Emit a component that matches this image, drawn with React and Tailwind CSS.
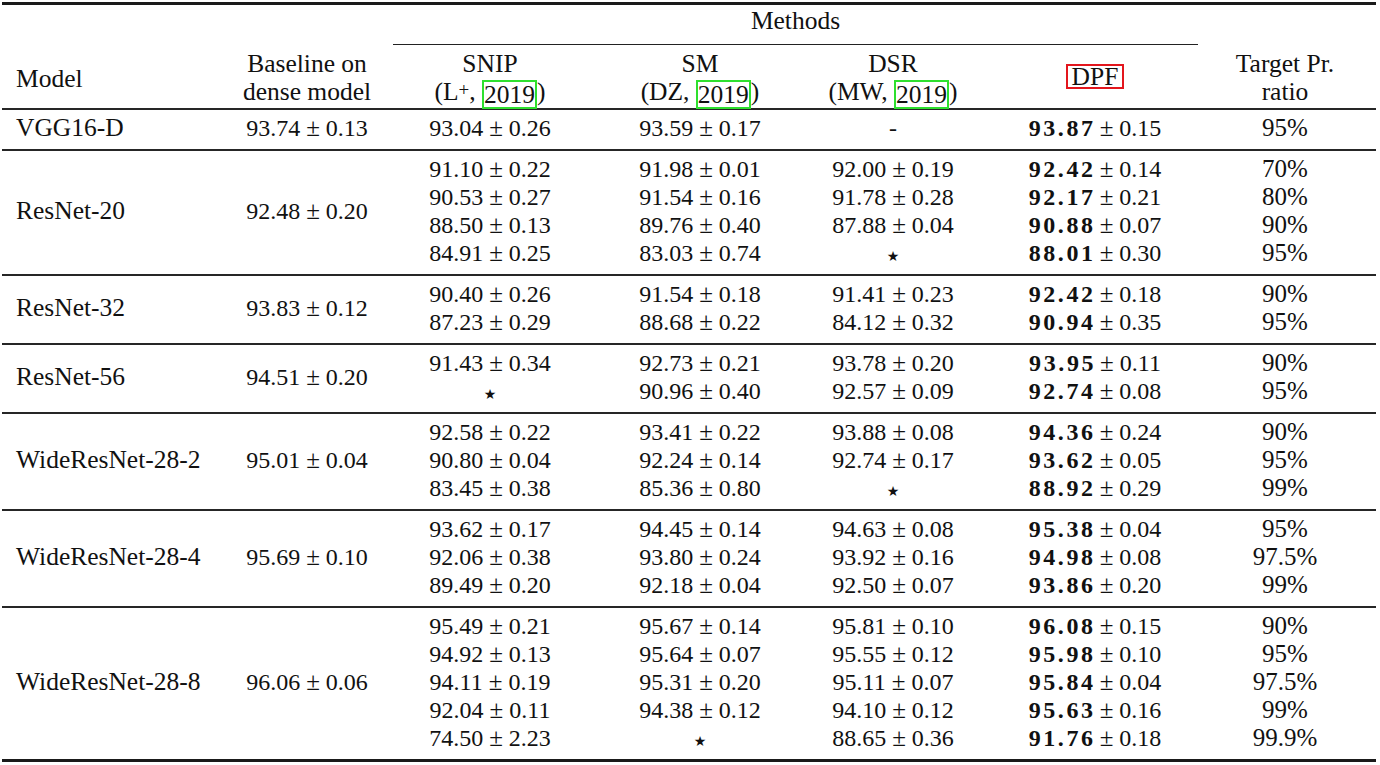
import React from 'react';

const STAR = '⋆';
const SERIF = "font-['Liberation_Serif',serif]";

const rows = [
  {
    model: 'VGG16-D', base: '93.74|0.13',
    snip: ['93.04|0.26'], sm: ['93.59|0.17'], dsr: ['-'], dpf: ['93.87|0.15'], target: ['95%'],
  },
  {
    model: 'ResNet-20', base: '92.48|0.20',
    snip: ['91.10|0.22', '90.53|0.27', '88.50|0.13', '84.91|0.25'],
    sm: ['91.98|0.01', '91.54|0.16', '89.76|0.40', '83.03|0.74'],
    dsr: ['92.00|0.19', '91.78|0.28', '87.88|0.04', STAR],
    dpf: ['92.42|0.14', '92.17|0.21', '90.88|0.07', '88.01|0.30'],
    target: ['70%', '80%', '90%', '95%'],
  },
  {
    model: 'ResNet-32', base: '93.83|0.12',
    snip: ['90.40|0.26', '87.23|0.29'],
    sm: ['91.54|0.18', '88.68|0.22'],
    dsr: ['91.41|0.23', '84.12|0.32'],
    dpf: ['92.42|0.18', '90.94|0.35'],
    target: ['90%', '95%'],
  },
  {
    model: 'ResNet-56', base: '94.51|0.20',
    snip: ['91.43|0.34', STAR],
    sm: ['92.73|0.21', '90.96|0.40'],
    dsr: ['93.78|0.20', '92.57|0.09'],
    dpf: ['93.95|0.11', '92.74|0.08'],
    target: ['90%', '95%'],
  },
  {
    model: 'WideResNet-28-2', base: '95.01|0.04',
    snip: ['92.58|0.22', '90.80|0.04', '83.45|0.38'],
    sm: ['93.41|0.22', '92.24|0.14', '85.36|0.80'],
    dsr: ['93.88|0.08', '92.74|0.17', STAR],
    dpf: ['94.36|0.24', '93.62|0.05', '88.92|0.29'],
    target: ['90%', '95%', '99%'],
  },
  {
    model: 'WideResNet-28-4', base: '95.69|0.10',
    snip: ['93.62|0.17', '92.06|0.38', '89.49|0.20'],
    sm: ['94.45|0.14', '93.80|0.24', '92.18|0.04'],
    dsr: ['94.63|0.08', '93.92|0.16', '92.50|0.07'],
    dpf: ['95.38|0.04', '94.98|0.08', '93.86|0.20'],
    target: ['95%', '97.5%', '99%'],
  },
  {
    model: 'WideResNet-28-8', base: '96.06|0.06',
    snip: ['95.49|0.21', '94.92|0.13', '94.11|0.19', '92.04|0.11', '74.50|2.23'],
    sm: ['95.67|0.14', '95.64|0.07', '95.31|0.20', '94.38|0.12', STAR],
    dsr: ['95.81|0.10', '95.55|0.12', '95.11|0.07', '94.10|0.12', '88.65|0.36'],
    dpf: ['96.08|0.15', '95.98|0.10', '95.84|0.04', '95.63|0.16', '91.76|0.18'],
    target: ['90%', '95%', '97.5%', '99%', '99.9%'],
  },
];

// column widths, chosen so the centres line up with the picture
const W = ['w-[244px]', 'w-[126px]', 'w-[240px]', 'w-[180px]', 'w-[206px]', 'w-[198px]', 'w-[182px]'];

function Num({ v, bold }) {
  if (v === STAR) {
    return <span className="text-[14px] font-['DejaVu_Sans',sans-serif] pt-[3px]">★</span>;
  }
  if (v === '-') return <span>-</span>;
  const [a, b] = v.split('|');
  return (
    <span className="whitespace-nowrap">
      <span className={bold ? 'font-bold tracking-[2.6px] mr-[-2px]' : ''}>{a}</span>
      <span className="mx-[6px] text-[25px]">±</span>
      <span>{b}</span>
    </span>
  );
}

function Cell({ w, lines, bold }) {
  return (
    <div className={`${w} flex flex-col items-center shrink-0`}>
      {lines.map((v, i) => (
        <div key={i} className="h-[28px] leading-[28px] flex justify-center whitespace-nowrap">
          <Num v={v} bold={bold} />
        </div>
      ))}
    </div>
  );
}

function Cite({ children }) {
  return (
    <span className="inline-block border-2 border-[#2ee02e] leading-[25px] -my-[2px] align-middle">{children}</span>
  );
}

function Rule({ thick }) {
  return <div className={`ml-[2px] w-[1374px] ${thick ? 'h-[3px] bg-[#1a1a1a]' : 'h-[2px] bg-[#262626]'}`} />;
}

export default function App() {
  return (
    <div className={`w-[1380px] h-[765px] bg-white text-[#111] ${SERIF} text-[24px] leading-[28px] overflow-hidden`}>
      <div className="pt-[2px]">
        <Rule thick />

        {/* header */}
        <div className="flex pt-[2px] text-[25.5px] leading-[28px]">
          <div className="w-[393px] shrink-0" />
          <div className="w-[805px] text-center">Methods</div>
        </div>
        <div className="ml-[393px] mt-[9px] w-[805px] h-px bg-[#222]" />
        <div className="flex mt-[5px] text-[25.5px] leading-[28px]">
          <div className={`${W[0]} shrink-0 flex items-center pl-[16px] pt-[2px]`}>Model</div>
          <div className={`${W[1]} shrink-0 flex flex-col items-center whitespace-nowrap`}>
            <span>Baseline on</span>
            <span>dense model</span>
          </div>
          <div className={`${W[2]} shrink-0 flex flex-col items-center whitespace-nowrap`}>
            <span>SNIP</span>
            <span>
              (L<sup className="text-[19px] relative -top-[4px]">+</sup>, <Cite>2019</Cite>)
            </span>
          </div>
          <div className={`${W[3]} shrink-0 flex flex-col items-center whitespace-nowrap`}>
            <span>SM</span>
            <span>
              (DZ, <Cite>2019</Cite>)
            </span>
          </div>
          <div className={`${W[4]} shrink-0 flex flex-col items-center whitespace-nowrap`}>
            <span>DSR</span>
            <span>
              (MW, <Cite>2019</Cite>)
            </span>
          </div>
          <div className={`${W[5]} shrink-0 flex items-center justify-center`}>
            <span className="border-2 border-[#e3161d] px-[4px] leading-[21px] -mt-[4px]">DPF</span>
          </div>
          <div className={`${W[6]} shrink-0 flex flex-col items-center whitespace-nowrap`}>
            <span>Target Pr.</span>
            <span>ratio</span>
          </div>
        </div>
        <div className="mt-[1px]">
          <Rule />
        </div>

        {/* body */}
        {rows.map((r, gi) => (
          <div key={r.model}>
            {gi > 0 && <Rule />}
            <div className="flex pt-[4px] pb-[7px]">
              <div className={`${W[0]} shrink-0 flex items-center pl-[16px] text-[25.5px] leading-[28px] whitespace-nowrap`}>{r.model}</div>
              <div className={`${W[1]} shrink-0 flex items-center justify-center whitespace-nowrap`}>
                <Num v={r.base} />
              </div>
              <Cell w={W[2]} lines={r.snip} />
              <Cell w={W[3]} lines={r.sm} />
              <Cell w={W[4]} lines={r.dsr} />
              <Cell w={W[5]} lines={r.dpf} bold />
              <div className={`${W[6]} shrink-0 flex flex-col items-center text-[25px]`}>
                {r.target.map((t, i) => (
                  <div key={i} className="h-[28px] leading-[28px]">{t}</div>
                ))}
              </div>
            </div>
          </div>
        ))}
        <Rule thick />
      </div>
    </div>
  );
}
